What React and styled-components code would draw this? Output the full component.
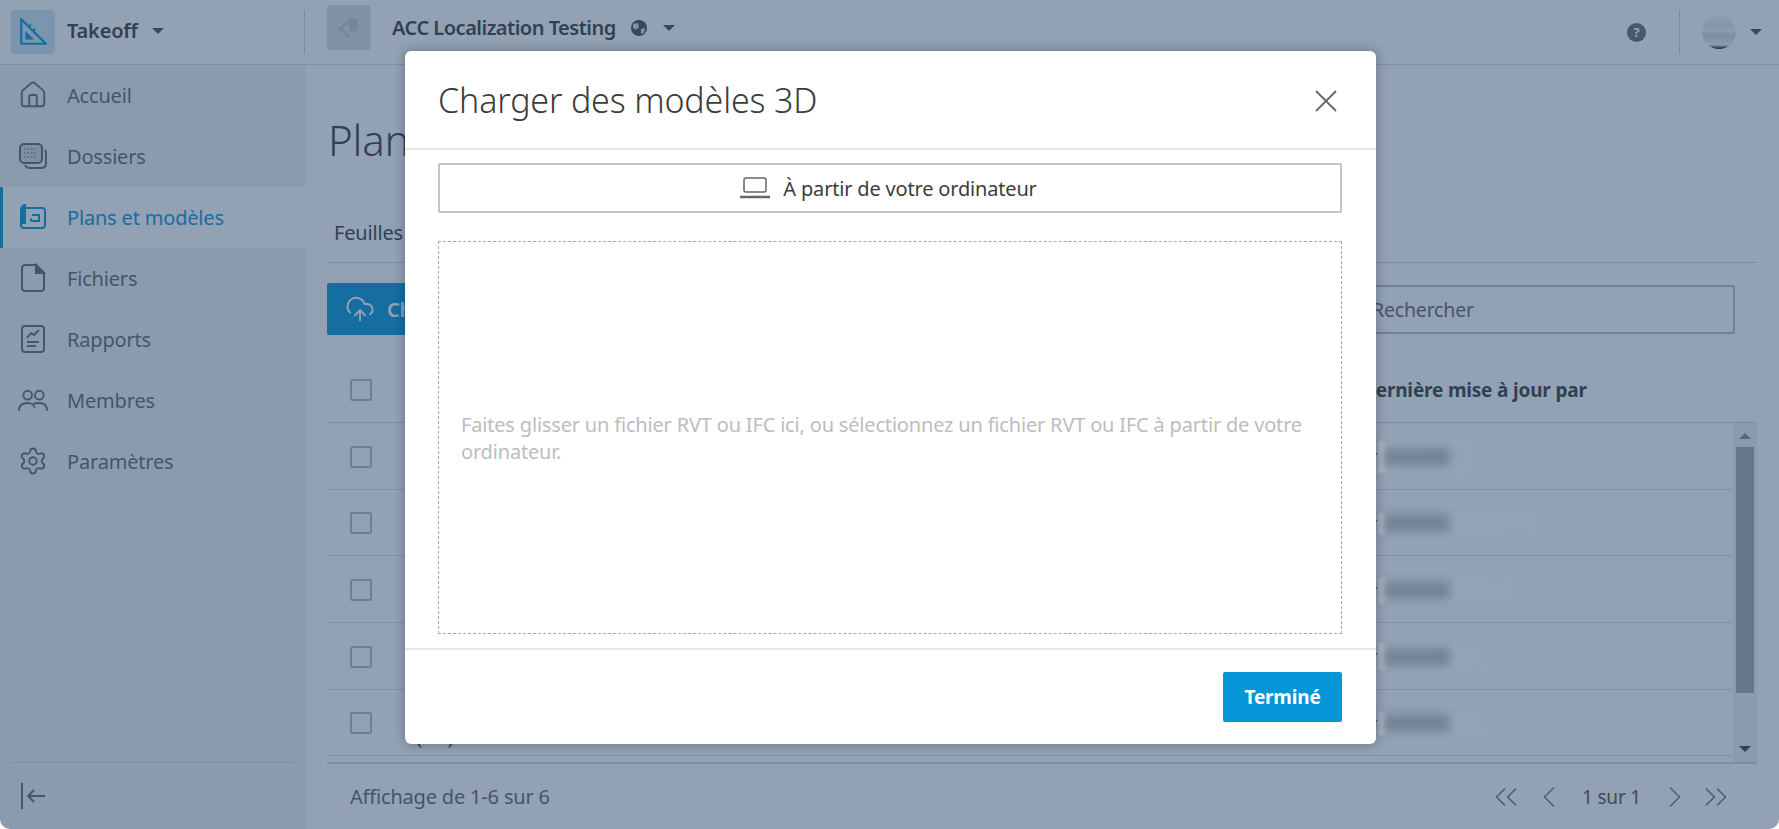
import React from 'react';
import styled, { createGlobalStyle } from 'styled-components';
import { ChevronLeft, ChevronRight, ChevronsLeft, ChevronsRight, X, House, Settings, CloudUpload } from 'lucide-react';

const GlobalStyle = createGlobalStyle`
  html, body {
    margin: 0;
    background: #fff;
  }
  body {
    font-family: "Noto Sans", "Liberation Sans", sans-serif;
    font-size: 20px;
    letter-spacing: -0.18px;
    color: #3c3c3c;
  }
`;

const Page = styled.div`
  position: relative;
  overflow: hidden;
  display: flex;
  flex-direction: column;
  height: 829px;
  background: #fff;
  border-radius: 0 0 10px 10px;
`;

const TopBar = styled.header`
  display: flex;
  align-items: center;
  flex: none;
  height: 64px;
  border-bottom: 1px solid #d9d9d9;
`;

const AppSwitch = styled.div`
  display: flex;
  align-items: center;
  box-sizing: border-box;
  width: 304px;
  padding-left: 11px;
  font-weight: 600;
  letter-spacing: -0.2px;
  margin-bottom: 3px;
`;

const LogoTile = styled.div`
  display: flex;
  align-items: center;
  justify-content: center;
  width: 44px;
  height: 44px;
  margin: 2px 12px 0 0;
  border-radius: 4px;
  background: #cfe6f3;
`;

const Caret = styled.span`
  display: inline-block;
  margin-left: ${(p) => p.$gap || 14}px;
  border-top: 6px solid #4a4a4a;
  border-left: 6px solid transparent;
  border-right: 6px solid transparent;
`;

const VRule = styled.div`
  flex: none;
  width: 1px;
  height: 44px;
  background: #d2d2d2;
`;

const ProjectTile = styled.div`
  display: flex;
  align-items: center;
  justify-content: center;
  width: 44px;
  height: 45px;
  margin: 0 21px 9px 22px;
  border-radius: 3px;
  background: #dfe0e3;
`;

const ProjectName = styled.div`
  display: flex;
  align-items: center;
  margin-bottom: 9px;
  font-weight: 600;
  letter-spacing: -0.5px;
`;

const TopRight = styled.div`
  display: flex;
  align-items: center;
  margin-left: auto;
  padding-right: 17px;
`;

const HelpDot = styled.div`
  display: flex;
  align-items: center;
  justify-content: center;
  width: 19px;
  height: 19px;
  margin-right: 33px;
  border-radius: 50%;
  background: #6d6d6d;
  color: #fff;
  font-size: 13px;
  font-weight: 700;
`;

const Avatar = styled.div`
  width: 34px;
  height: 34px;
  margin-left: 22px;
  border-radius: 50%;
  overflow: hidden;
  background: linear-gradient(#f2f2f2 0 12%, #e6e6e6 30%, #f5f5f5 45%, #d6d6d6 60%, #f4f4f4 88%, #333 97%);
`;

const Body = styled.div`
  display: flex;
  flex: 1;
  min-height: 0;
`;

const Sidebar = styled.nav`
  display: flex;
  flex-direction: column;
  flex: none;
  width: 305px;
  background: #f1f3f2;
`;

const NavItem = styled.div`
  display: flex;
  align-items: center;
  flex: none;
  box-sizing: border-box;
  height: 61px;
  padding: 0 0 1px 18px;
  color: ${(p) => (p.$active ? '#0696d7' : '#666')};
  background: ${(p) => (p.$active ? '#fff' : 'transparent')};
  border-left: 3px solid ${(p) => (p.$active ? '#0696d7' : 'transparent')};
`;

const NavIcon = styled.span`
  display: flex;
  justify-content: center;
  width: 30px;
  margin: 0 19px 0 -3px;
`;

const SideFoot = styled.div`
  display: flex;
  align-items: center;
  box-sizing: border-box;
  height: 67px;
  margin: auto 11px 0;
  padding-left: 9px;
  border-top: 1px solid #d6d8d8;
`;

const Main = styled.main`
  display: flex;
  flex-direction: column;
  flex: 1;
  min-width: 0;
  padding: 0 22px;
`;

const Title = styled.h1`
  margin: 50px 0 0 1px;
  font-size: 42px;
  line-height: 50px;
  font-weight: 300;
`;

const Tabs = styled.div`
  height: 98px;
  box-sizing: border-box;
  padding: 56px 0 0 7px;
  line-height: 24px;
  border-bottom: 1px solid #d4d4d4;
`;

const Toolbar = styled.div`
  display: flex;
  align-items: center;
  height: 52px;
  margin-top: 20px;
  padding-right: 22px;
`;

const UploadButton = styled.div`
  display: flex;
  align-items: center;
  gap: 12px;
  box-sizing: border-box;
  height: 52px;
  padding: 0 20px 0 18px;
  border-radius: 2px;
  background: #0696d7;
  color: #fff;
  font-weight: 600;
`;

const Search = styled.div`
  display: flex;
  align-items: center;
  box-sizing: border-box;
  width: 399px;
  height: 49px;
  margin-left: auto;
  padding-left: 34px;
  border: 2px solid #bdbdbd;
  border-radius: 2px;
  color: #666;
  font-size: 19.5px;
`;

const HeadRow = styled.div`
  display: grid;
  grid-template-columns: 1035px 1fr;
  align-items: center;
  box-sizing: border-box;
  height: 68px;
  margin-top: 20px;
  padding-top: 2px;
  border-bottom: 1px solid #d4d4d4;
  font-size: 19px;
  font-weight: 700;
`;

const Check = styled.span`
  display: block;
  box-sizing: border-box;
  width: 22px;
  height: 22px;
  margin-left: 23px;
  border: 2px solid #b9b9b9;
  border-radius: 2px;
`;

const TableBody = styled.div`
  display: flex;
  height: 339px;
  border-bottom: 2px solid #d4d4d4;
`;

const Rows = styled.div`
  flex: 1;
  overflow: hidden;
`;

const Row = styled.div`
  display: grid;
  grid-template-columns: 83px 952px 1fr;
  align-items: center;
  box-sizing: border-box;
  height: 66.67px;
  padding-top: 2px;
  border-bottom: 1px solid #dcdcdc;
`;

const NameCell = styled.div`
  padding-left: 6px;
  line-height: 28px;
  white-space: pre-line;
`;

const UserCell = styled.div`
  position: relative;
  display: flex;
  align-items: center;
  height: 100%;
  margin-left: -16px;
`;

/* sits above the dimming layer: the smudge next to the dialog is lighter than it */
const Patch = styled.span`
  position: absolute;
  z-index: 2;
  left: 33px;
  width: ${(p) => p.$width}px;
  height: ${(p) => p.$height}px;
  background: linear-gradient(to right, rgba(255, 255, 255, 0.28), rgba(255, 255, 255, 0.03) 9px, rgba(255, 255, 255, 0.02));
  filter: blur(1.5px);
`;

const BlurName = styled.span`
  width: 68px;
  height: 18px;
  margin-left: 5px;
  background: #bdbdbd;
  filter: blur(5px);
`;

const ScrollBar = styled.div`
  display: flex;
  flex-direction: column;
  align-items: center;
  flex: none;
  width: 24px;
  background: #f1f1f1;
`;

const ArrowUp = styled.span`
  margin-top: 10px;
  border-bottom: 6px solid #8a8a8a;
  border-left: 6px solid transparent;
  border-right: 6px solid transparent;
`;

const Thumb = styled.div`
  width: 18px;
  height: 246px;
  margin-top: 8px;
  background: #a8a8a8;
`;

const ArrowDown = styled.span`
  margin-top: auto;
  margin-bottom: 10px;
  border-top: 6px solid #404040;
  border-left: 6px solid transparent;
  border-right: 6px solid transparent;
`;

const Footer = styled.div`
  display: flex;
  align-items: center;
  flex: 1;
  padding: 0 22px 0 23px;
  color: #666;
`;

const Pager = styled.div`
  display: flex;
  align-items: center;
  margin-left: auto;
  color: #777;
`;

const PagerText = styled.span`
  margin: 0 16px 0 15px;
  font-size: 19px;
  color: #555;
`;

const PagerGap = styled.span`
  display: inline-block;
  width: ${(p) => p.$width}px;
`;

const Overlay = styled.div`
  position: absolute;
  z-index: 1;
  inset: 0;
  display: flex;
  justify-content: center;
  align-items: flex-start;
  padding: 51px 0 0 2px;
  background: rgba(37, 67, 105, 0.5);
`;

const Modal = styled.section`
  display: flex;
  flex-direction: column;
  box-sizing: border-box;
  width: 971px;
  height: 693px;
  border-radius: 6px;
  background: #fff;
  box-shadow: 0 0 12px rgba(0, 0, 0, 0.3);
`;

const ModalHead = styled.div`
  display: flex;
  align-items: center;
  justify-content: space-between;
  flex: none;
  box-sizing: border-box;
  height: 99px;
  padding: 0 31px 0 33px;
  border-bottom: 2px solid #e6e6e6;
`;

const ModalTitle = styled.h2`
  margin: 0;
  font-size: 34px;
  font-weight: 300;
  letter-spacing: -0.15px;
  color: #3c3c3c;
`;

const CloseIcon = styled(X)`
  margin-top: 2px;
  color: #666;
`;

const ModalBody = styled.div`
  display: flex;
  flex-direction: column;
  flex: 1;
  gap: 28px;
  padding: 13px 34px 14px 33px;
  border-bottom: 2px solid #e6e6e6;
`;

const SourceButton = styled.div`
  display: flex;
  align-items: center;
  justify-content: center;
  gap: 13px;
  flex: none;
  box-sizing: border-box;
  height: 50px;
  padding-right: 3px;
  border: 2px solid #c4c4c4;
  border-radius: 2px;
  color: #3c3c3c;
`;

const DropZone = styled.div`
  display: flex;
  align-items: center;
  flex: 1;
  box-sizing: border-box;
  padding: 0 21px 0 22px;
  border: 1px dashed #a8a8a8;
  color: #bdbdbd;
  line-height: 27px;
`;

const ModalFoot = styled.div`
  display: flex;
  align-items: center;
  justify-content: flex-end;
  flex: none;
  height: 94px;
  padding: 0 34px;
`;

const DoneButton = styled.div`
  display: flex;
  align-items: center;
  justify-content: center;
  width: 119px;
  height: 50px;
  border-radius: 2px;
  background: #0696d7;
  color: #fff;
  font-size: 19px;
  font-weight: 700;
`;

const TakeoffLogo = () => (
  <svg width="30" height="30" viewBox="0 0 28 28" fill="none" stroke="#0696d7" strokeWidth="2" strokeLinejoin="round">
    <path d="M3 2 L26 25 H3 Z" />
    <path d="M7 13 L15 21 H7 Z" fill="#0696d7" stroke="none" />
    <path d="M10 9 L12 7 M14 13 L16 11" />
  </svg>
);

const ProjectIcon = () => (
  <svg width="24" height="26" viewBox="0 0 24 26" fill="none" stroke="#c4c4c6" strokeWidth="2.5">
    <path d="M14 4 L3 14 L13 22" />
    <path d="M10 8 L15 3 L21 5 V15 L14 18 Z" fill="#c8c8ca" stroke="none" />
  </svg>
);

const GlobeIcon = () => (
  <svg width="18" height="18" viewBox="0 0 18 18" style={{ marginLeft: 14 }}>
    <circle cx="9" cy="9" r="8" fill="#4a4a4a" />
    <path d="M3 5 L8 4 L9 8 L6 11 L3 9 Z M11 10 L15 9 L14 14 L11 15 Z" fill="#dcdcdc" />
  </svg>
);

const stroke = { fill: 'none', stroke: 'currentColor', strokeWidth: 2 };

const DossierIcon = () => (
  <svg width="30" height="28" viewBox="0 0 30 28" {...stroke}>
    <rect x="2" y="2" width="22" height="19" rx="4" fill="#d8d8d8" />
    <path d="M6 7h14M6 11h14M6 15h14" stroke="#888" strokeDasharray="1.5 2" strokeWidth="1.5" />
    <path d="M27 8 Q28 9 28 12 V21 Q28 26 23 26 H12 Q8 26 7 23" />
  </svg>
);

const PlansIcon = () => (
  <svg width="28" height="28" viewBox="0 0 28 28" {...stroke}>
    <rect x="2" y="5" width="24" height="20" rx="3" />
    <path d="M2 7 Q2 3 6 2 V20 H2 Z" fill="currentColor" />
    <path d="M13 12 H20 V18 H12 M12 15.5 V18" />
  </svg>
);

const FileIcon = () => (
  <svg width="26" height="30" viewBox="0 0 26 30" {...stroke}>
    <path d="M6 2 H16 L24 10 V25 Q24 28 21 28 H6 Q2 28 2 25 V5 Q2 2 6 2 Z" />
    <path d="M16 2 L24 10 H16 Z" fill="currentColor" />
  </svg>
);

const ReportIcon = () => (
  <svg width="26" height="30" viewBox="0 0 26 30" {...stroke}>
    <rect x="2" y="2" width="22" height="26" rx="3" />
    <path d="M7 14 L11 9 L14 11 L19 6 M7 18 H19 M7 22 H16" />
  </svg>
);

const MembersIcon = () => (
  <svg width="31" height="23" viewBox="0 0 31 23" {...stroke}>
    <circle cx="10" cy="6" r="4.5" />
    <circle cx="22" cy="6" r="4.5" />
    <path d="M1 22 C1 16 5 14 10 14 C14 14 17 16 17 19" />
    <path d="M16 15 C18 14 20 14 22 14 C26 14 30 16 30 22" />
  </svg>
);

const LaptopIcon = () => (
  <svg width="30" height="22" viewBox="0 0 30 22" fill="none" stroke="#666" strokeWidth="1.5">
    <rect x="4" y="1" width="22" height="14" rx="2" />
    <path d="M0 20 H30" strokeWidth="2.5" />
  </svg>
);

const CollapseIcon = () => (
  <svg width="26" height="28" viewBox="0 0 26 28" fill="none" stroke="#666" strokeWidth="2">
    <path d="M2 1 V27" />
    <path d="M25 14 H9 M14 8 L8 14 L14 20" />
  </svg>
);

const navItems = [
  { label: 'Accueil', icon: <House size={32} strokeWidth={1.5} /> },
  { label: 'Dossiers', icon: <DossierIcon /> },
  { label: 'Plans et modèles', icon: <PlansIcon />, active: true },
  { label: 'Fichiers', icon: <FileIcon /> },
  { label: 'Rapports', icon: <ReportIcon /> },
  { label: 'Membres', icon: <MembersIcon /> },
  { label: 'Paramètres', icon: <Settings size={32} strokeWidth={1.5} /> },
];

const rows = [
  { patch: 86, height: 32, name: '' },
  { patch: 150, height: 21, name: '' },
  { patch: 132, height: 25, name: '' },
  { patch: 107, height: 27, name: '' },
  { patch: 107, height: 23, name: '\n(3D)' },
];

export default function App() {
  return (
    <Page>
      <GlobalStyle />
      <TopBar>
        <AppSwitch>
          <LogoTile><TakeoffLogo /></LogoTile>
          Takeoff
          <Caret />
        </AppSwitch>
        <VRule />
        <ProjectTile><ProjectIcon /></ProjectTile>
        <ProjectName>
          ACC Localization Testing
          <GlobeIcon />
          <Caret $gap={15} />
        </ProjectName>
        <TopRight>
          <HelpDot>?</HelpDot>
          <VRule />
          <Avatar />
          <Caret />
        </TopRight>
      </TopBar>
      <Body>
        <Sidebar>
          {navItems.map((item) => (
            <NavItem key={item.label} $active={item.active}>
              <NavIcon>{item.icon}</NavIcon>
              {item.label}
            </NavItem>
          ))}
          <SideFoot><CollapseIcon /></SideFoot>
        </Sidebar>
        <Main>
          <Title>Plans et modèles</Title>
          <Tabs>Feuilles</Tabs>
          <Toolbar>
            <UploadButton>
              <CloudUpload size={30} strokeWidth={1.5} />
              Charger
            </UploadButton>
            <Search>Rechercher</Search>
          </Toolbar>
          <HeadRow>
            <Check />
            <span>Dernière mise à jour par</span>
          </HeadRow>
          <TableBody>
            <Rows>
              {rows.map((row) => (
                <Row key={row.patch + row.height}>
                  <Check />
                  <NameCell>{row.name}</NameCell>
                  <UserCell>
                    Par
                    <Patch $width={row.patch} $height={row.height} />
                    <BlurName />
                  </UserCell>
                </Row>
              ))}
            </Rows>
            <ScrollBar>
              <ArrowUp />
              <Thumb />
              <ArrowDown />
            </ScrollBar>
          </TableBody>
          <Footer>
            Affichage de 1-6 sur 6
            <Pager>
              <ChevronsLeft size={38} strokeWidth={1} />
              <PagerGap $width={6} />
              <ChevronLeft size={36} strokeWidth={1} />
              <PagerText>1 sur 1</PagerText>
              <ChevronRight size={36} strokeWidth={1} />
              <PagerGap $width={4} />
              <ChevronsRight size={38} strokeWidth={1} />
            </Pager>
          </Footer>
        </Main>
      </Body>
      <Overlay>
        <Modal>
          <ModalHead>
            <ModalTitle>Charger des modèles 3D</ModalTitle>
            <CloseIcon size={38} strokeWidth={1.15} />
          </ModalHead>
          <ModalBody>
            <SourceButton>
              <LaptopIcon />
              À partir de votre ordinateur
            </SourceButton>
            <DropZone>
              <div>
                Faites glisser un fichier RVT ou IFC ici, ou sélectionnez un fichier RVT ou IFC à partir de votre
                ordinateur.
              </div>
            </DropZone>
          </ModalBody>
          <ModalFoot>
            <DoneButton>Terminé</DoneButton>
          </ModalFoot>
        </Modal>
      </Overlay>
    </Page>
  );
}
